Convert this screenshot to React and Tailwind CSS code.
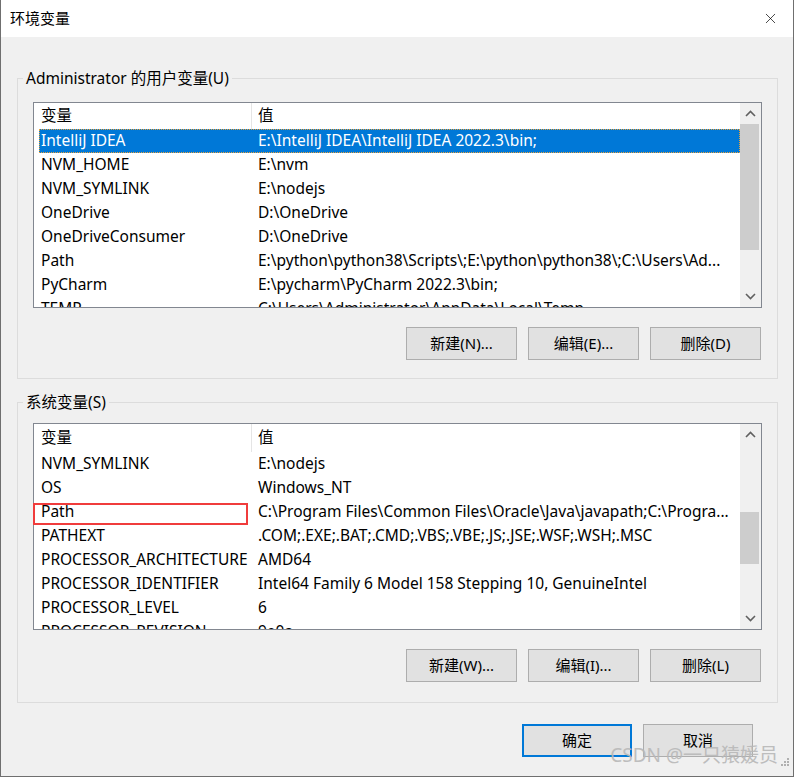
import { X } from "lucide-react";

const userVars = [
  ["IntelliJ IDEA", "E:\\IntelliJ IDEA\\IntelliJ IDEA 2022.3\\bin;"],
  ["NVM_HOME", "E:\\nvm"],
  ["NVM_SYMLINK", "E:\\nodejs"],
  ["OneDrive", "D:\\OneDrive"],
  ["OneDriveConsumer", "D:\\OneDrive"],
  ["Path", "E:\\python\\python38\\Scripts\\;E:\\python\\python38\\;C:\\Users\\Ad..."],
  ["PyCharm", "E:\\pycharm\\PyCharm 2022.3\\bin;"],
  ["TEMP", "C:\\Users\\Administrator\\AppData\\Local\\Temp"],
];

const sysVars = [
  ["NVM_SYMLINK", "E:\\nodejs"],
  ["OS", "Windows_NT"],
  ["Path", "C:\\Program Files\\Common Files\\Oracle\\Java\\javapath;C:\\Progra..."],
  ["PATHEXT", ".COM;.EXE;.BAT;.CMD;.VBS;.VBE;.JS;.JSE;.WSF;.WSH;.MSC"],
  ["PROCESSOR_ARCHITECTURE", "AMD64"],
  ["PROCESSOR_IDENTIFIER", "Intel64 Family 6 Model 158 Stepping 10, GenuineIntel"],
  ["PROCESSOR_LEVEL", "6"],
  ["PROCESSOR_REVISION", "9e0a"],
];

const Chevron = ({ up }) => (
  <svg width="11" height="7" viewBox="0 0 11 7">
    <polyline
      points={up ? "1,6 5.5,1.5 10,6" : "1,1 5.5,5.5 10,1"}
      fill="none"
      stroke="#606060"
      strokeWidth="1.6"
    />
  </svg>
);

const ScrollBar = ({ thumbTop }) => (
  <div className="w-[21px] bg-[#f0f0f0] flex flex-col">
    <div className="h-[21px] flex items-center justify-center">
      <Chevron up />
    </div>
    <div className="flex-1">
      {thumbTop === 0 ? (
        <div className="w-[19px] bg-[#cdcdcd] h-[126px]" />
      ) : (
        <div className="w-[19px] bg-[#cdcdcd] mt-[67px] h-[52px]" />
      )}
    </div>
    <div className="h-[21px] flex items-center justify-center">
      <Chevron />
    </div>
  </div>
);

const VarList = ({ rows, selected, headerH, thumbTop, marked, height }) => (
  <div className={"relative border border-[#828790] bg-white flex " + height}>
    <div className="flex-1 overflow-hidden">
      <div className={"flex ml-[5px] " + headerH}>
        <div className="w-[213px] pl-[2px] flex items-center border-r border-[#e5e5e5]">变量</div>
        <div className="pl-[6px] flex items-center">值</div>
      </div>
      {rows.map(([name, value], i) => (
        <div
          key={name}
          className={
            "flex ml-[5px] h-[24px] items-center whitespace-nowrap " +
            (selected === i
              ? "bg-[#0078d7] text-white border border-dotted border-[#e9a23b]"
              : "border border-transparent")
          }
        >
          <div className="w-[212px] pl-[1px]">{name}</div>
          <div className="pl-[6px]">{value}</div>
        </div>
      ))}
    </div>
    <ScrollBar thumbTop={thumbTop} />
    {marked && (
      <div className="absolute left-[-1px] top-[79px] w-[215px] h-[22px] border-2 border-[#f03c3c]" />
    )}
  </div>
);

const Btn = ({ children, primary }) => (
  <button
    className={
      "h-[33px] bg-[#e1e1e1] text-[15px] text-black " +
      (primary ? "w-[110px] border-2 border-[#0078d7]" : "border border-[#adadad]")
    }
  >
    {children}
  </button>
);

const Group = ({ title, children, className }) => (
  <fieldset className={"border border-[#dcdcdc] px-0 " + className}>
    <legend className="ml-[5px] px-[3px] leading-[20px]">{title}</legend>
    {children}
  </fieldset>
);

const App = () => {
  return (
    <div className="relative w-[794px] h-[777px] overflow-hidden bg-[#f0f0f0] border-l border-r border-b border-[#6f6f6f] text-[15.5px] text-black font-['Noto_Sans','Noto_Sans_CJK_SC',sans-serif]">
      <div className="h-[37px] bg-white flex items-center justify-between pl-[9px] pr-[14px] text-[15px]">
        <span>环境变量</span>
        <X size={17} strokeWidth={1} color="#000" />
      </div>

      <div className="pt-[31px] pl-[16px] pr-[15px]">
        <Group title="Administrator 的用户变量(U)" className="pb-[18px]">
          <div className="px-[15px] mt-[14px]">
            <VarList rows={userVars} selected={0} headerH="h-[26px]" thumbTop={0} height="h-[206px]" />
          </div>
          <div className="flex justify-end gap-[11px] pr-[16px] mt-[19px]">
            <div className="w-[111px] flex"><Btn><span className="w-[109px] inline-block">新建(N)...</span></Btn></div>
            <div className="w-[111px] flex"><Btn><span className="w-[109px] inline-block">编辑(E)...</span></Btn></div>
            <div className="w-[111px] flex"><Btn><span className="w-[109px] inline-block">删除(D)</span></Btn></div>
          </div>
        </Group>

        <Group title="系统变量(S)" className="mt-[13px] pb-[20px]">
          <div className="px-[15px] mt-[11px]">
            <VarList rows={sysVars} selected={-1} headerH="h-[28px]" thumbTop={1} height="h-[207px]" marked />
          </div>
          <div className="flex justify-end gap-[11px] pr-[16px] mt-[19px]">
            <div className="w-[111px] flex"><Btn><span className="w-[109px] inline-block">新建(W)...</span></Btn></div>
            <div className="w-[111px] flex"><Btn><span className="w-[109px] inline-block">编辑(I)...</span></Btn></div>
            <div className="w-[111px] flex"><Btn><span className="w-[109px] inline-block">删除(L)</span></Btn></div>
          </div>
        </Group>

        <div className="flex justify-end gap-[11px] pr-[25px] mt-[21px]">
          <Btn primary>确定</Btn>
          <div className="w-[110px] flex"><Btn><span className="w-[108px] inline-block">取消</span></Btn></div>
        </div>
      </div>

      <div className="absolute right-[15px] bottom-[7px] text-[19px] text-[#b8b8b8] opacity-90">
        CSDN @一只猿媛员
      </div>
      <svg className="absolute right-[3px] bottom-[9px]" width="10" height="10" viewBox="0 0 10 10">
        <rect x="7" y="1" width="2" height="2" fill="#b0b0b0" />
        <rect x="4" y="4" width="2" height="2" fill="#b0b0b0" />
        <rect x="7" y="4" width="2" height="2" fill="#b0b0b0" />
        <rect x="1" y="7" width="2" height="2" fill="#b0b0b0" />
        <rect x="4" y="7" width="2" height="2" fill="#b0b0b0" />
        <rect x="7" y="7" width="2" height="2" fill="#b0b0b0" />
      </svg>
    </div>
  );
};

export default App;
